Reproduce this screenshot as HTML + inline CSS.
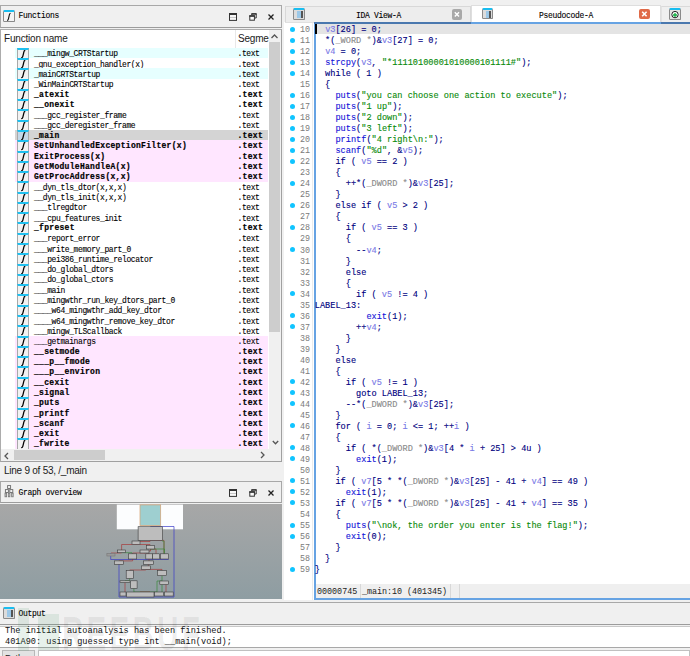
<!DOCTYPE html>
<html><head><meta charset="utf-8">
<style>
*{margin:0;padding:0;box-sizing:border-box}
html,body{width:690px;height:656px;overflow:hidden;background:#f0f0f0;font-family:"Liberation Sans",sans-serif}
.a{position:absolute}
.mono{font-family:"Liberation Mono",monospace;white-space:pre}
.tt{position:absolute;font-family:"Liberation Mono",monospace;font-size:8px;letter-spacing:-0.3px;color:#000;white-space:pre;-webkit-text-stroke:0.1px #000;transform:scaleY(1.15);transform-origin:0 0}
/* generic window-icon */
.wi{position:absolute;width:12px;height:12px;border:1px solid #8a8a8a;border-top:2px solid #18bdf0;background:#e8e8e8;border-radius:1.5px}
/* list rows */
.r{position:absolute;left:14px;width:253px;height:10.28px;font-family:"Liberation Mono",monospace;font-size:8px;letter-spacing:-0.4px;line-height:10.28px;color:#000;white-space:pre;-webkit-text-stroke:0.1px #000}
.r.b{font-weight:bold;letter-spacing:0.3px;-webkit-text-stroke:0.2px #000}
.r .fi{position:absolute;z-index:1;left:2px;top:-0.2px;width:12px;height:10.5px;border-left:1.3px solid #a8a8a8;border-right:1.3px solid #a8a8a8;border-top:2px solid #1ec0f0;background:#f2f2f2}
.r .fi svg{position:absolute;left:0;top:0}
.r .fn{position:absolute;left:19px;top:0.4px;transform:scaleY(1.2);transform-origin:0 0}
.r .sg{position:absolute;left:222.5px;top:0.4px;transform:scaleY(1.2);transform-origin:0 0}
.r.b .fn,.r.b .sg{top:-0.2px;transform:scaleY(1.1)}
.ln{position:absolute;left:0;width:29px;height:11px}
.ln b{position:absolute;left:4.5px;top:1.5px;width:5px;height:5px;border-radius:50%;background:#10c4ff}
.ln span{position:absolute;right:4px;top:0px;font-family:"Liberation Mono",monospace;font-size:8.4px;line-height:11px;color:#7a7a7a}
.cl{position:absolute;left:0.8px;width:373px;height:11px;font-family:"Liberation Mono",monospace;font-size:8.6px;line-height:11px;color:#000080;white-space:pre;-webkit-text-stroke:0.12px}
.cl span.t{position:relative;top:0.5px}
.st{color:#0a8a0a}
.ty{color:#8a8a8a}
.lv{color:#7a7ae6}
.fu{color:#1414d8}
</style></head><body>

<!-- ============ FUNCTIONS PANEL ============ -->
<div class="a" style="left:0;top:5px;width:282px;height:23px;background:#f0f0f0;border:1px solid #a8a8a8;border-bottom:1.5px solid #9c9c9c"></div>
<div class="wi" style="left:3px;top:10px;width:11.5px;height:11.5px;background:#f4f4f4"><svg class="a" style="left:0;top:0" width="10" height="10" viewBox="0 0 10 10"><path d="M6.6 1.2 C5.9 1.2 5.6 1.8 5.4 2.6 L4.4 7.2 C4.2 8 3.8 8.4 3.1 8.4" stroke="#111" stroke-width="1.1" fill="none"/></svg></div>
<span class="tt" style="left:18.5px;top:10px">Functions</span>
<!-- title buttons -->
<svg class="a" style="left:228px;top:12px" width="50" height="10" viewBox="0 0 50 10">
  <rect x="1.5" y="1.8" width="7" height="6.6" fill="#f8f8f8" stroke="#333" stroke-width="1"/>
  <rect x="1" y="1" width="8" height="2" fill="#333"/>
  <line x1="2" y1="5.5" x2="8" y2="5.5" stroke="#bbb" stroke-width="0.8"/>
  <path d="M23.8 3 V1.8 H28.2 V6 H26.8" fill="none" stroke="#333" stroke-width="1"/>
  <rect x="21.8" y="3.8" width="4.6" height="4.4" fill="#fafafa" stroke="#333" stroke-width="1"/>
  <rect x="21.3" y="3.3" width="5.6" height="1.5" fill="#333"/>
  <rect x="23.3" y="1.3" width="5.4" height="1.3" fill="#333"/>
  <path d="M40.5 2.5 L45.5 7.5 M45.5 2.5 L40.5 7.5" stroke="#222" stroke-width="1.3"/>
</svg>

<div class="a" style="left:0;top:29px;width:282px;height:433px;background:#fff;border:1px solid #acacac;border-right:1.5px solid #a0a0a0;border-bottom:1.5px solid #a0a0a0;overflow:hidden">
  <div class="a" style="left:3px;top:3px;font-size:10px;letter-spacing:-0.2px;color:#1a1a1a">Function name</div>
  <div class="a" style="left:233.5px;top:0;width:1px;height:18px;background:#e8e8e8"></div>
  <div class="a" style="left:237px;top:3px;font-size:10px;letter-spacing:-0.2px;color:#1a1a1a">Segme</div>
<div class="r" style="top:17.90px;background:#e6ffff"><i class="fi"><svg width="10" height="9" viewBox="0 0 10 9"><path d="M7.3 0.6 C6.5 0.4 6.1 1 5.9 1.8 L4.8 6.4 C4.6 7.2 4.2 7.7 3.2 7.5" stroke="#000" stroke-width="1.25" fill="none"/></svg></i><span class="fn">___mingw_CRTStartup</span><span class="sg">.text</span></div>
<div class="r" style="top:28.18px;background:transparent"><i class="fi"><svg width="10" height="9" viewBox="0 0 10 9"><path d="M7.3 0.6 C6.5 0.4 6.1 1 5.9 1.8 L4.8 6.4 C4.6 7.2 4.2 7.7 3.2 7.5" stroke="#000" stroke-width="1.25" fill="none"/></svg></i><span class="fn">_gnu_exception_handler(x)</span><span class="sg">.text</span></div>
<div class="r" style="top:38.46px;background:#e6ffff"><i class="fi"><svg width="10" height="9" viewBox="0 0 10 9"><path d="M7.3 0.6 C6.5 0.4 6.1 1 5.9 1.8 L4.8 6.4 C4.6 7.2 4.2 7.7 3.2 7.5" stroke="#000" stroke-width="1.25" fill="none"/></svg></i><span class="fn">_mainCRTStartup</span><span class="sg">.text</span></div>
<div class="r" style="top:48.74px;background:transparent"><i class="fi"><svg width="10" height="9" viewBox="0 0 10 9"><path d="M7.3 0.6 C6.5 0.4 6.1 1 5.9 1.8 L4.8 6.4 C4.6 7.2 4.2 7.7 3.2 7.5" stroke="#000" stroke-width="1.25" fill="none"/></svg></i><span class="fn">_WinMainCRTStartup</span><span class="sg">.text</span></div>
<div class="r b" style="top:59.02px;background:transparent"><i class="fi"><svg width="10" height="9" viewBox="0 0 10 9"><path d="M7.3 0.6 C6.5 0.4 6.1 1 5.9 1.8 L4.8 6.4 C4.6 7.2 4.2 7.7 3.2 7.5" stroke="#000" stroke-width="1.25" fill="none"/></svg></i><span class="fn">_atexit</span><span class="sg">.text</span></div>
<div class="r b" style="top:69.30px;background:transparent"><i class="fi"><svg width="10" height="9" viewBox="0 0 10 9"><path d="M7.3 0.6 C6.5 0.4 6.1 1 5.9 1.8 L4.8 6.4 C4.6 7.2 4.2 7.7 3.2 7.5" stroke="#000" stroke-width="1.25" fill="none"/></svg></i><span class="fn">__onexit</span><span class="sg">.text</span></div>
<div class="r" style="top:79.58px;background:transparent"><i class="fi"><svg width="10" height="9" viewBox="0 0 10 9"><path d="M7.3 0.6 C6.5 0.4 6.1 1 5.9 1.8 L4.8 6.4 C4.6 7.2 4.2 7.7 3.2 7.5" stroke="#000" stroke-width="1.25" fill="none"/></svg></i><span class="fn">___gcc_register_frame</span><span class="sg">.text</span></div>
<div class="r" style="top:89.86px;background:transparent"><i class="fi"><svg width="10" height="9" viewBox="0 0 10 9"><path d="M7.3 0.6 C6.5 0.4 6.1 1 5.9 1.8 L4.8 6.4 C4.6 7.2 4.2 7.7 3.2 7.5" stroke="#000" stroke-width="1.25" fill="none"/></svg></i><span class="fn">___gcc_deregister_frame</span><span class="sg">.text</span></div>
<div class="r b" style="top:100.14px;background:#d4d4d4"><i class="fi" style="background:#c4d8e8"><svg width="10" height="9" viewBox="0 0 10 9"><path d="M7.3 0.6 C6.5 0.4 6.1 1 5.9 1.8 L4.8 6.4 C4.6 7.2 4.2 7.7 3.2 7.5" stroke="#000" stroke-width="1.25" fill="none"/></svg></i><span class="fn">_main</span><span class="sg">.text</span></div>
<div class="r b" style="top:110.42px;background:#ffe6ff"><i class="fi"><svg width="10" height="9" viewBox="0 0 10 9"><path d="M7.3 0.6 C6.5 0.4 6.1 1 5.9 1.8 L4.8 6.4 C4.6 7.2 4.2 7.7 3.2 7.5" stroke="#000" stroke-width="1.25" fill="none"/></svg></i><span class="fn">SetUnhandledExceptionFilter(x)</span><span class="sg">.text</span></div>
<div class="r b" style="top:120.70px;background:#ffe6ff"><i class="fi"><svg width="10" height="9" viewBox="0 0 10 9"><path d="M7.3 0.6 C6.5 0.4 6.1 1 5.9 1.8 L4.8 6.4 C4.6 7.2 4.2 7.7 3.2 7.5" stroke="#000" stroke-width="1.25" fill="none"/></svg></i><span class="fn">ExitProcess(x)</span><span class="sg">.text</span></div>
<div class="r b" style="top:130.98px;background:#ffe6ff"><i class="fi"><svg width="10" height="9" viewBox="0 0 10 9"><path d="M7.3 0.6 C6.5 0.4 6.1 1 5.9 1.8 L4.8 6.4 C4.6 7.2 4.2 7.7 3.2 7.5" stroke="#000" stroke-width="1.25" fill="none"/></svg></i><span class="fn">GetModuleHandleA(x)</span><span class="sg">.text</span></div>
<div class="r b" style="top:141.26px;background:#ffe6ff"><i class="fi"><svg width="10" height="9" viewBox="0 0 10 9"><path d="M7.3 0.6 C6.5 0.4 6.1 1 5.9 1.8 L4.8 6.4 C4.6 7.2 4.2 7.7 3.2 7.5" stroke="#000" stroke-width="1.25" fill="none"/></svg></i><span class="fn">GetProcAddress(x,x)</span><span class="sg">.text</span></div>
<div class="r" style="top:151.54px;background:transparent"><i class="fi"><svg width="10" height="9" viewBox="0 0 10 9"><path d="M7.3 0.6 C6.5 0.4 6.1 1 5.9 1.8 L4.8 6.4 C4.6 7.2 4.2 7.7 3.2 7.5" stroke="#000" stroke-width="1.25" fill="none"/></svg></i><span class="fn">__dyn_tls_dtor(x,x,x)</span><span class="sg">.text</span></div>
<div class="r" style="top:161.82px;background:transparent"><i class="fi"><svg width="10" height="9" viewBox="0 0 10 9"><path d="M7.3 0.6 C6.5 0.4 6.1 1 5.9 1.8 L4.8 6.4 C4.6 7.2 4.2 7.7 3.2 7.5" stroke="#000" stroke-width="1.25" fill="none"/></svg></i><span class="fn">__dyn_tls_init(x,x,x)</span><span class="sg">.text</span></div>
<div class="r" style="top:172.10px;background:transparent"><i class="fi"><svg width="10" height="9" viewBox="0 0 10 9"><path d="M7.3 0.6 C6.5 0.4 6.1 1 5.9 1.8 L4.8 6.4 C4.6 7.2 4.2 7.7 3.2 7.5" stroke="#000" stroke-width="1.25" fill="none"/></svg></i><span class="fn">___tlregdtor</span><span class="sg">.text</span></div>
<div class="r" style="top:182.38px;background:transparent"><i class="fi"><svg width="10" height="9" viewBox="0 0 10 9"><path d="M7.3 0.6 C6.5 0.4 6.1 1 5.9 1.8 L4.8 6.4 C4.6 7.2 4.2 7.7 3.2 7.5" stroke="#000" stroke-width="1.25" fill="none"/></svg></i><span class="fn">___cpu_features_init</span><span class="sg">.text</span></div>
<div class="r b" style="top:192.66px;background:transparent"><i class="fi"><svg width="10" height="9" viewBox="0 0 10 9"><path d="M7.3 0.6 C6.5 0.4 6.1 1 5.9 1.8 L4.8 6.4 C4.6 7.2 4.2 7.7 3.2 7.5" stroke="#000" stroke-width="1.25" fill="none"/></svg></i><span class="fn">_fpreset</span><span class="sg">.text</span></div>
<div class="r" style="top:202.94px;background:transparent"><i class="fi"><svg width="10" height="9" viewBox="0 0 10 9"><path d="M7.3 0.6 C6.5 0.4 6.1 1 5.9 1.8 L4.8 6.4 C4.6 7.2 4.2 7.7 3.2 7.5" stroke="#000" stroke-width="1.25" fill="none"/></svg></i><span class="fn">___report_error</span><span class="sg">.text</span></div>
<div class="r" style="top:213.22px;background:transparent"><i class="fi"><svg width="10" height="9" viewBox="0 0 10 9"><path d="M7.3 0.6 C6.5 0.4 6.1 1 5.9 1.8 L4.8 6.4 C4.6 7.2 4.2 7.7 3.2 7.5" stroke="#000" stroke-width="1.25" fill="none"/></svg></i><span class="fn">___write_memory_part_0</span><span class="sg">.text</span></div>
<div class="r" style="top:223.50px;background:transparent"><i class="fi"><svg width="10" height="9" viewBox="0 0 10 9"><path d="M7.3 0.6 C6.5 0.4 6.1 1 5.9 1.8 L4.8 6.4 C4.6 7.2 4.2 7.7 3.2 7.5" stroke="#000" stroke-width="1.25" fill="none"/></svg></i><span class="fn">___pei386_runtime_relocator</span><span class="sg">.text</span></div>
<div class="r" style="top:233.78px;background:transparent"><i class="fi"><svg width="10" height="9" viewBox="0 0 10 9"><path d="M7.3 0.6 C6.5 0.4 6.1 1 5.9 1.8 L4.8 6.4 C4.6 7.2 4.2 7.7 3.2 7.5" stroke="#000" stroke-width="1.25" fill="none"/></svg></i><span class="fn">___do_global_dtors</span><span class="sg">.text</span></div>
<div class="r" style="top:244.06px;background:transparent"><i class="fi"><svg width="10" height="9" viewBox="0 0 10 9"><path d="M7.3 0.6 C6.5 0.4 6.1 1 5.9 1.8 L4.8 6.4 C4.6 7.2 4.2 7.7 3.2 7.5" stroke="#000" stroke-width="1.25" fill="none"/></svg></i><span class="fn">___do_global_ctors</span><span class="sg">.text</span></div>
<div class="r" style="top:254.34px;background:transparent"><i class="fi"><svg width="10" height="9" viewBox="0 0 10 9"><path d="M7.3 0.6 C6.5 0.4 6.1 1 5.9 1.8 L4.8 6.4 C4.6 7.2 4.2 7.7 3.2 7.5" stroke="#000" stroke-width="1.25" fill="none"/></svg></i><span class="fn">___main</span><span class="sg">.text</span></div>
<div class="r" style="top:264.62px;background:transparent"><i class="fi"><svg width="10" height="9" viewBox="0 0 10 9"><path d="M7.3 0.6 C6.5 0.4 6.1 1 5.9 1.8 L4.8 6.4 C4.6 7.2 4.2 7.7 3.2 7.5" stroke="#000" stroke-width="1.25" fill="none"/></svg></i><span class="fn">___mingwthr_run_key_dtors_part_0</span><span class="sg">.text</span></div>
<div class="r" style="top:274.90px;background:transparent"><i class="fi"><svg width="10" height="9" viewBox="0 0 10 9"><path d="M7.3 0.6 C6.5 0.4 6.1 1 5.9 1.8 L4.8 6.4 C4.6 7.2 4.2 7.7 3.2 7.5" stroke="#000" stroke-width="1.25" fill="none"/></svg></i><span class="fn">____w64_mingwthr_add_key_dtor</span><span class="sg">.text</span></div>
<div class="r" style="top:285.18px;background:transparent"><i class="fi"><svg width="10" height="9" viewBox="0 0 10 9"><path d="M7.3 0.6 C6.5 0.4 6.1 1 5.9 1.8 L4.8 6.4 C4.6 7.2 4.2 7.7 3.2 7.5" stroke="#000" stroke-width="1.25" fill="none"/></svg></i><span class="fn">____w64_mingwthr_remove_key_dtor</span><span class="sg">.text</span></div>
<div class="r" style="top:295.46px;background:transparent"><i class="fi"><svg width="10" height="9" viewBox="0 0 10 9"><path d="M7.3 0.6 C6.5 0.4 6.1 1 5.9 1.8 L4.8 6.4 C4.6 7.2 4.2 7.7 3.2 7.5" stroke="#000" stroke-width="1.25" fill="none"/></svg></i><span class="fn">___mingw_TLScallback</span><span class="sg">.text</span></div>
<div class="r" style="top:305.74px;background:#ffe6ff"><i class="fi"><svg width="10" height="9" viewBox="0 0 10 9"><path d="M7.3 0.6 C6.5 0.4 6.1 1 5.9 1.8 L4.8 6.4 C4.6 7.2 4.2 7.7 3.2 7.5" stroke="#000" stroke-width="1.25" fill="none"/></svg></i><span class="fn">___getmainargs</span><span class="sg">.text</span></div>
<div class="r b" style="top:316.02px;background:#ffe6ff"><i class="fi"><svg width="10" height="9" viewBox="0 0 10 9"><path d="M7.3 0.6 C6.5 0.4 6.1 1 5.9 1.8 L4.8 6.4 C4.6 7.2 4.2 7.7 3.2 7.5" stroke="#000" stroke-width="1.25" fill="none"/></svg></i><span class="fn">__setmode</span><span class="sg">.text</span></div>
<div class="r b" style="top:326.30px;background:#ffe6ff"><i class="fi"><svg width="10" height="9" viewBox="0 0 10 9"><path d="M7.3 0.6 C6.5 0.4 6.1 1 5.9 1.8 L4.8 6.4 C4.6 7.2 4.2 7.7 3.2 7.5" stroke="#000" stroke-width="1.25" fill="none"/></svg></i><span class="fn">___p__fmode</span><span class="sg">.text</span></div>
<div class="r b" style="top:336.58px;background:#ffe6ff"><i class="fi"><svg width="10" height="9" viewBox="0 0 10 9"><path d="M7.3 0.6 C6.5 0.4 6.1 1 5.9 1.8 L4.8 6.4 C4.6 7.2 4.2 7.7 3.2 7.5" stroke="#000" stroke-width="1.25" fill="none"/></svg></i><span class="fn">___p__environ</span><span class="sg">.text</span></div>
<div class="r b" style="top:346.86px;background:#ffe6ff"><i class="fi"><svg width="10" height="9" viewBox="0 0 10 9"><path d="M7.3 0.6 C6.5 0.4 6.1 1 5.9 1.8 L4.8 6.4 C4.6 7.2 4.2 7.7 3.2 7.5" stroke="#000" stroke-width="1.25" fill="none"/></svg></i><span class="fn">__cexit</span><span class="sg">.text</span></div>
<div class="r b" style="top:357.14px;background:#ffe6ff"><i class="fi"><svg width="10" height="9" viewBox="0 0 10 9"><path d="M7.3 0.6 C6.5 0.4 6.1 1 5.9 1.8 L4.8 6.4 C4.6 7.2 4.2 7.7 3.2 7.5" stroke="#000" stroke-width="1.25" fill="none"/></svg></i><span class="fn">_signal</span><span class="sg">.text</span></div>
<div class="r b" style="top:367.42px;background:#ffe6ff"><i class="fi"><svg width="10" height="9" viewBox="0 0 10 9"><path d="M7.3 0.6 C6.5 0.4 6.1 1 5.9 1.8 L4.8 6.4 C4.6 7.2 4.2 7.7 3.2 7.5" stroke="#000" stroke-width="1.25" fill="none"/></svg></i><span class="fn">_puts</span><span class="sg">.text</span></div>
<div class="r b" style="top:377.70px;background:#ffe6ff"><i class="fi"><svg width="10" height="9" viewBox="0 0 10 9"><path d="M7.3 0.6 C6.5 0.4 6.1 1 5.9 1.8 L4.8 6.4 C4.6 7.2 4.2 7.7 3.2 7.5" stroke="#000" stroke-width="1.25" fill="none"/></svg></i><span class="fn">_printf</span><span class="sg">.text</span></div>
<div class="r b" style="top:387.98px;background:#ffe6ff"><i class="fi"><svg width="10" height="9" viewBox="0 0 10 9"><path d="M7.3 0.6 C6.5 0.4 6.1 1 5.9 1.8 L4.8 6.4 C4.6 7.2 4.2 7.7 3.2 7.5" stroke="#000" stroke-width="1.25" fill="none"/></svg></i><span class="fn">_scanf</span><span class="sg">.text</span></div>
<div class="r b" style="top:398.26px;background:#ffe6ff"><i class="fi"><svg width="10" height="9" viewBox="0 0 10 9"><path d="M7.3 0.6 C6.5 0.4 6.1 1 5.9 1.8 L4.8 6.4 C4.6 7.2 4.2 7.7 3.2 7.5" stroke="#000" stroke-width="1.25" fill="none"/></svg></i><span class="fn">_exit</span><span class="sg">.text</span></div>
<div class="r b" style="top:408.54px;background:#ffe6ff"><i class="fi"><svg width="10" height="9" viewBox="0 0 10 9"><path d="M7.3 0.6 C6.5 0.4 6.1 1 5.9 1.8 L4.8 6.4 C4.6 7.2 4.2 7.7 3.2 7.5" stroke="#000" stroke-width="1.25" fill="none"/></svg></i><span class="fn">_fwrite</span><span class="sg">.text</span></div>
  <!-- v scrollbar -->
  <div class="a" style="left:267.5px;top:0;width:12px;height:432px;background:#f0f0f0"></div>
  <div class="a" style="left:267.5px;top:11.8px;width:11px;height:290.5px;background:#cdcdcd"></div>
  <svg class="a" style="left:269px;top:3px" width="9" height="7" viewBox="0 0 9 7"><path d="M1.5 5 L4.5 2 L7.5 5" stroke="#555" stroke-width="1.3" fill="none"/></svg>
  <svg class="a" style="left:269.8px;top:409px" width="9" height="7" viewBox="0 0 9 7"><path d="M1.8 2 L4.5 4.8 L7.2 2" stroke="#555" stroke-width="1.3" fill="none"/></svg>
  <!-- h scrollbar -->
  <div class="a" style="left:0;top:419px;width:268px;height:12px;background:#f0f0f0"></div>
  <div class="a" style="left:12.5px;top:419.5px;width:91px;height:10.5px;background:#cdcdcd"></div>
  <svg class="a" style="left:2px;top:422px" width="7" height="8" viewBox="0 0 7 8"><path d="M5 1 L2 4 L5 7" stroke="#555" stroke-width="1.3" fill="none"/></svg>
  <svg class="a" style="left:257.8px;top:421px" width="7" height="8" viewBox="0 0 7 8"><path d="M2 1 L5 4 L2 7" stroke="#555" stroke-width="1.3" fill="none"/></svg>
</div>
<div class="a" style="left:4px;top:464.5px;font-size:10px;letter-spacing:-0.25px;color:#1a1a1a">Line 9 of 53, /_main</div>

<!-- ============ GRAPH OVERVIEW ============ -->
<div class="a" style="left:0;top:481px;width:282px;height:22px;background:#f0f0f0;border:1px solid #a8a8a8;border-bottom:1.5px solid #9c9c9c"></div>
<svg class="a" style="left:3.8px;top:485px" width="11" height="13" viewBox="0 0 11 13">
  <rect x="3.6" y="0.6" width="3" height="2.8" fill="#f4f4f4" stroke="#6a6a6a" stroke-width="0.9"/>
  <path d="M5.1 3.4 V4.6" stroke="#6a6a6a" stroke-width="0.9"/>
  <rect x="1.4" y="4.6" width="3" height="2.9" fill="#f4f4f4" stroke="#6a6a6a" stroke-width="0.9"/>
  <rect x="5.8" y="4.6" width="3" height="2.9" fill="#f4f4f4" stroke="#6a6a6a" stroke-width="0.9"/>
  <rect x="0.6" y="7.8" width="2.4" height="4.4" fill="#777"/>
  <rect x="3.9" y="7.8" width="2.4" height="4.4" fill="#777"/>
  <rect x="7.2" y="7.8" width="2.4" height="4.4" fill="#777"/>
  <rect x="1.3" y="8.6" width="1" height="2.8" fill="#bbb"/>
  <rect x="4.6" y="8.6" width="1" height="2.8" fill="#bbb"/>
  <rect x="7.9" y="8.6" width="1" height="2.8" fill="#bbb"/>
</svg>
<span class="tt" style="left:18.5px;top:487px">Graph overview</span>
<svg class="a" style="left:228px;top:488px" width="50" height="10" viewBox="0 0 50 10">
  <rect x="1.5" y="1.8" width="7" height="6.6" fill="#f8f8f8" stroke="#333" stroke-width="1"/>
  <rect x="1" y="1" width="8" height="2" fill="#333"/>
  <line x1="2" y1="5.5" x2="8" y2="5.5" stroke="#bbb" stroke-width="0.8"/>
  <path d="M23.8 3 V1.8 H28.2 V6 H26.8" fill="none" stroke="#333" stroke-width="1"/>
  <rect x="21.8" y="3.8" width="4.6" height="4.4" fill="#fafafa" stroke="#333" stroke-width="1"/>
  <rect x="21.3" y="3.3" width="5.6" height="1.5" fill="#333"/>
  <rect x="23.3" y="1.3" width="5.4" height="1.3" fill="#333"/>
  <path d="M40.5 2.5 L45.5 7.5 M45.5 2.5 L40.5 7.5" stroke="#222" stroke-width="1.3"/>
</svg>
<div class="a" style="left:0;top:504px;width:282px;height:95px;background:linear-gradient(#a7a7a7,#8e9da2)"></div>
<svg class="a" style="left:0;top:504px" width="282" height="95" viewBox="0 504 282 95">
  <rect x="116.8" y="504.6" width="66.2" height="24.7" fill="#fcfdfe"/>
  <rect x="140" y="504.9" width="20.7" height="20.7" fill="#9ecfd0" stroke="#d8a070" stroke-width="0.7"/>
  <g fill="none" stroke-width="0.7">
    <path d="M150.3 526.5 H174 V597 H119 V563" stroke="#3a3ac8"/>
    <path d="M110.7 553 V559.5 H168.6" stroke="#3a3ac8"/>
    <path d="M150 540.4 V541.5 H136 V545 M150 540.4 H164 V553.8 M136 544.5 H150 V545.5" stroke="#a83a3a"/>
    <path d="M162 540.4 V541 H164 V553.8" stroke="#3a8a3a"/>
    <path d="M136 544.5 H121.6 V550 M150.5 549 V551 H144.5 V550 M150.5 549 H156 V553.8 M121.6 552.7 V553 H111 M144.5 553 H132.6 V553.8 M144 553 H149 V553.8" stroke="#a83a3a"/>
    <path d="M150 549 H164.5 V553.8 M121.6 552.7 H132 V553.8" stroke="#3a8a3a"/>
    <path d="M132.6 559 V560.9 H118.8 M149 559 V560.9 M148.4 564.3 V565.9 M145.8 569.4 V570 H129.7 V570.5 M145.8 569.4 H162 V570.6" stroke="#a83a3a"/>
    <path d="M162 575.7 V581 M129.7 578.4 V580.8 H125 M162 584.5 V592 M133.9 588.4 V592 H157 V581 H162" stroke="#3a8a3a"/>
    <path d="M125 582.5 V592 M140 592 H150 M166 584.5 V592" stroke="#a83a3a"/>
  </g>
  <g fill="#bdbdbd" stroke="#3c3c3c" stroke-width="0.6">
    <rect x="138.1" y="526.7" width="24.4" height="13.7"/>
    <rect x="132" y="541" width="8" height="3.5"/>
    <rect x="146.5" y="545.5" width="8" height="3.5"/>
    <rect x="117.6" y="550" width="8" height="2.7"/>
    <rect x="140" y="550" width="9" height="3"/>
    <rect x="106.9" y="553.6" width="8.1" height="2.4" fill="#9a9a9a" stroke="#777"/>
    <rect x="128.6" y="553.8" width="8.1" height="5.2"/>
    <rect x="145.8" y="553.8" width="6.9" height="5.2"/>
    <rect x="152.7" y="553.8" width="6.8" height="5.2"/>
    <rect x="160.5" y="553.8" width="8.1" height="5.2"/>
    <rect x="114.3" y="560.9" width="9.1" height="3.4"/>
    <rect x="143.5" y="560.9" width="9.9" height="3.4"/>
    <rect x="141.3" y="565.9" width="9" height="3.5"/>
    <rect x="126.2" y="570.5" width="7.1" height="7.9"/>
    <rect x="157.5" y="570.6" width="9.1" height="5.1"/>
    <rect x="120" y="580.8" width="10" height="1.7"/>
    <rect x="130.7" y="580.8" width="6.4" height="7.6"/>
    <rect x="159.8" y="581" width="8.7" height="3.5"/>
    <rect x="120" y="592" width="6" height="4"/>
    <rect x="126.7" y="592" width="27.3" height="5"/>
    <rect x="154.6" y="592" width="8.9" height="4"/>
    <rect x="164.3" y="592" width="8.9" height="4"/>
  </g>
</svg>


<!-- ============ PSEUDOCODE PANEL ============ -->
<div class="a" style="left:285px;top:6px;width:186px;height:16.5px;background:#ededed;border:1px solid #d8d8d8;border-bottom:none"></div>
<div class="wi" style="left:293px;top:8px;width:11.5px;height:11.5px;background:#dcdcdc"><div class="a" style="left:3px;top:1px;width:3.5px;height:7px;background:#9cc8e8"></div><div class="a" style="left:6.5px;top:1px;width:2px;height:7px;background:#555"></div></div>
<span class="tt" style="left:356px;top:10px">IDA View-A</span>
<div class="a" style="left:452px;top:9px;width:9.5px;height:10.5px;background:#a9a9a9;border-radius:2px"></div>
<svg class="a" style="left:452px;top:9px" width="10" height="11" viewBox="0 0 10 11"><path d="M2.8 3.3 L7 7.5 M7 3.3 L2.8 7.5" stroke="#fff" stroke-width="1.4"/></svg>

<div class="a" style="left:471px;top:5px;width:190px;height:17.5px;background:#fff;border:1px solid #dedede;border-bottom:none"></div>
<div class="wi" style="left:481.5px;top:7.5px;width:11.5px;height:11.5px;background:#dcdcdc"><div class="a" style="left:3px;top:1px;width:3.5px;height:7px;background:#9cc8e8"></div><div class="a" style="left:6.5px;top:1px;width:2px;height:7px;background:#555"></div></div>
<span class="tt" style="left:539px;top:9.5px">Pseudocode-A</span>
<div class="a" style="left:639px;top:8.7px;width:10.8px;height:10px;background:#e06a48;border-radius:2px"></div>
<svg class="a" style="left:639px;top:8.7px" width="11" height="10" viewBox="0 0 11 10"><path d="M3.2 2.8 L7.6 7.2 M7.6 2.8 L3.2 7.2" stroke="#fff" stroke-width="1.6"/></svg>

<div class="a" style="left:661px;top:6.3px;width:29px;height:16px;background:#efefef;border-top:1px solid #dadada;border-left:1px solid #e2e2e2"></div>
<div class="wi" style="left:668.5px;top:7.8px;width:12px;height:11.8px;background:#e4e4e4"></div>
<svg class="a" style="left:668.5px;top:7.8px" width="12" height="12" viewBox="0 0 12 12"><circle cx="6" cy="6.6" r="3.2" fill="#fff" stroke="#222" stroke-width="1"/><path d="M6 5 V9 M4 7 H8" stroke="#10b040" stroke-width="1.3"/></svg>

<div class="a" style="left:284px;top:22px;width:30px;height:578px;background:#fff"></div>
<div class="a" style="left:312px;top:22px;width:1px;height:578px;background:#ececec"></div>
<div class="a" style="left:285px;top:22px;width:29px;height:1px;background:#e0e0e0"></div>
<div class="a" style="left:285px;top:22px;width:29px;height:578px">
<div class="ln" style="top:3.10px"><b></b><span>10</span></div>
<div class="ln" style="top:14.12px"><b></b><span>11</span></div>
<div class="ln" style="top:25.14px"><b></b><span>12</span></div>
<div class="ln" style="top:36.16px"><b></b><span>13</span></div>
<div class="ln" style="top:47.18px"><b></b><span>14</span></div>
<div class="ln" style="top:58.20px"><span>15</span></div>
<div class="ln" style="top:69.22px"><b></b><span>16</span></div>
<div class="ln" style="top:80.24px"><b></b><span>17</span></div>
<div class="ln" style="top:91.26px"><b></b><span>18</span></div>
<div class="ln" style="top:102.28px"><b></b><span>19</span></div>
<div class="ln" style="top:113.30px"><b></b><span>20</span></div>
<div class="ln" style="top:124.32px"><b></b><span>21</span></div>
<div class="ln" style="top:135.34px"><b></b><span>22</span></div>
<div class="ln" style="top:146.36px"><span>23</span></div>
<div class="ln" style="top:157.38px"><b></b><span>24</span></div>
<div class="ln" style="top:168.40px"><span>25</span></div>
<div class="ln" style="top:179.42px"><b></b><span>26</span></div>
<div class="ln" style="top:190.44px"><span>27</span></div>
<div class="ln" style="top:201.46px"><b></b><span>28</span></div>
<div class="ln" style="top:212.48px"><span>29</span></div>
<div class="ln" style="top:223.50px"><b></b><span>30</span></div>
<div class="ln" style="top:234.52px"><span>31</span></div>
<div class="ln" style="top:245.54px"><span>32</span></div>
<div class="ln" style="top:256.56px"><span>33</span></div>
<div class="ln" style="top:267.58px"><b></b><span>34</span></div>
<div class="ln" style="top:278.60px"><span>35</span></div>
<div class="ln" style="top:289.62px"><b></b><span>36</span></div>
<div class="ln" style="top:300.64px"><b></b><span>37</span></div>
<div class="ln" style="top:311.66px"><span>38</span></div>
<div class="ln" style="top:322.68px"><span>39</span></div>
<div class="ln" style="top:333.70px"><span>40</span></div>
<div class="ln" style="top:344.72px"><span>41</span></div>
<div class="ln" style="top:355.74px"><b></b><span>42</span></div>
<div class="ln" style="top:366.76px"><b></b><span>43</span></div>
<div class="ln" style="top:377.78px"><b></b><span>44</span></div>
<div class="ln" style="top:388.80px"><span>45</span></div>
<div class="ln" style="top:399.82px"><b></b><span>46</span></div>
<div class="ln" style="top:410.84px"><span>47</span></div>
<div class="ln" style="top:421.86px"><b></b><span>48</span></div>
<div class="ln" style="top:432.88px"><b></b><span>49</span></div>
<div class="ln" style="top:443.90px"><span>50</span></div>
<div class="ln" style="top:454.92px"><b></b><span>51</span></div>
<div class="ln" style="top:465.94px"><b></b><span>52</span></div>
<div class="ln" style="top:476.96px"><b></b><span>53</span></div>
<div class="ln" style="top:487.98px"><span>54</span></div>
<div class="ln" style="top:499.00px"><b></b><span>55</span></div>
<div class="ln" style="top:510.02px"><b></b><span>56</span></div>
<div class="ln" style="top:521.04px"><span>57</span></div>
<div class="ln" style="top:532.06px"><span>58</span></div>
<div class="ln" style="top:543.08px"><b></b><span>59</span></div>
</div>
<div class="a" style="left:314px;top:22px;width:376px;height:578px;background:#fff;border:2px solid #66a3e3;border-right:none"></div>
<div class="a" style="left:314px;top:22px;width:157px;height:1.7px;background:#4a78ae"></div>
<div class="a" style="left:661px;top:22px;width:29px;height:1.7px;background:#4a78ae"></div>
<div class="a" style="left:316px;top:23.7px;width:374px;height:0.8px;background:#fff3e6"></div>
<div class="a" style="left:317px;top:24.3px;width:373px;height:9.7px;background:#e4e4e4"></div>
<div class="a" style="left:314px;top:22px;width:376px;height:560px">
<div class="cl hl" style="top:3.10px">  <span class="lv">v3</span>[26] = 0;</div>
<div class="cl" style="top:14.12px">  *(<span class="ty">_WORD *</span>)&amp;<span class="lv">v3</span>[27] = 0;</div>
<div class="cl" style="top:25.14px">  <span class="lv">v4</span> = 0;</div>
<div class="cl" style="top:36.16px">  <span class="fu">strcpy</span>(<span class="lv">v3</span>, <span class="st">&quot;*11110100001010000101111#&quot;</span>);</div>
<div class="cl" style="top:47.18px">  while ( 1 )</div>
<div class="cl" style="top:58.20px">  {</div>
<div class="cl" style="top:69.22px">    <span class="fu">puts</span>(<span class="st">&quot;you can choose one action to execute&quot;</span>);</div>
<div class="cl" style="top:80.24px">    <span class="fu">puts</span>(<span class="st">&quot;1 up&quot;</span>);</div>
<div class="cl" style="top:91.26px">    <span class="fu">puts</span>(<span class="st">&quot;2 down&quot;</span>);</div>
<div class="cl" style="top:102.28px">    <span class="fu">puts</span>(<span class="st">&quot;3 left&quot;</span>);</div>
<div class="cl" style="top:113.30px">    <span class="fu">printf</span>(<span class="st">&quot;4 right\n:&quot;</span>);</div>
<div class="cl" style="top:124.32px">    <span class="fu">scanf</span>(<span class="st">&quot;%d&quot;</span>, &amp;<span class="lv">v5</span>);</div>
<div class="cl" style="top:135.34px">    if ( <span class="lv">v5</span> == 2 )</div>
<div class="cl" style="top:146.36px">    {</div>
<div class="cl" style="top:157.38px">      ++*(<span class="ty">_DWORD *</span>)&amp;<span class="lv">v3</span>[25];</div>
<div class="cl" style="top:168.40px">    }</div>
<div class="cl" style="top:179.42px">    else if ( <span class="lv">v5</span> &gt; 2 )</div>
<div class="cl" style="top:190.44px">    {</div>
<div class="cl" style="top:201.46px">      if ( <span class="lv">v5</span> == 3 )</div>
<div class="cl" style="top:212.48px">      {</div>
<div class="cl" style="top:223.50px">        --<span class="lv">v4</span>;</div>
<div class="cl" style="top:234.52px">      }</div>
<div class="cl" style="top:245.54px">      else</div>
<div class="cl" style="top:256.56px">      {</div>
<div class="cl" style="top:267.58px">        if ( <span class="lv">v5</span> != 4 )</div>
<div class="cl" style="top:278.60px">LABEL_13:</div>
<div class="cl" style="top:289.62px">          <span class="fu">exit</span>(1);</div>
<div class="cl" style="top:300.64px">        ++<span class="lv">v4</span>;</div>
<div class="cl" style="top:311.66px">      }</div>
<div class="cl" style="top:322.68px">    }</div>
<div class="cl" style="top:333.70px">    else</div>
<div class="cl" style="top:344.72px">    {</div>
<div class="cl" style="top:355.74px">      if ( <span class="lv">v5</span> != 1 )</div>
<div class="cl" style="top:366.76px">        goto LABEL_13;</div>
<div class="cl" style="top:377.78px">      --*(<span class="ty">_DWORD *</span>)&amp;<span class="lv">v3</span>[25];</div>
<div class="cl" style="top:388.80px">    }</div>
<div class="cl" style="top:399.82px">    for ( <span class="lv">i</span> = 0; <span class="lv">i</span> &lt;= 1; ++<span class="lv">i</span> )</div>
<div class="cl" style="top:410.84px">    {</div>
<div class="cl" style="top:421.86px">      if ( *(<span class="ty">_DWORD *</span>)&amp;<span class="lv">v3</span>[4 * <span class="lv">i</span> + 25] &gt; 4u )</div>
<div class="cl" style="top:432.88px">        <span class="fu">exit</span>(1);</div>
<div class="cl" style="top:443.90px">    }</div>
<div class="cl" style="top:454.92px">    if ( <span class="lv">v7</span>[5 * *(<span class="ty">_DWORD *</span>)&amp;<span class="lv">v3</span>[25] - 41 + <span class="lv">v4</span>] == 49 )</div>
<div class="cl" style="top:465.94px">      <span class="fu">exit</span>(1);</div>
<div class="cl" style="top:476.96px">    if ( <span class="lv">v7</span>[5 * *(<span class="ty">_DWORD *</span>)&amp;<span class="lv">v3</span>[25] - 41 + <span class="lv">v4</span>] == 35 )</div>
<div class="cl" style="top:487.98px">    {</div>
<div class="cl" style="top:499.00px">      <span class="fu">puts</span>(<span class="st">&quot;\nok, the order you enter is the flag!&quot;</span>);</div>
<div class="cl" style="top:510.02px">      <span class="fu">exit</span>(0);</div>
<div class="cl" style="top:521.04px">    }</div>
<div class="cl" style="top:532.06px">  }</div>
<div class="cl" style="top:543.08px">}</div>
</div>
<div class="a" style="left:315.2px;top:23.5px;width:1.8px;height:10.5px;background:#000"></div>
<div class="a" style="left:316px;top:584px;width:374px;height:14px;background:#efefef"></div>
<div class="a" style="left:360px;top:584px;width:1px;height:14px;background:#d8d8d8"></div>
<div class="a" style="left:450px;top:584px;width:1px;height:14px;background:#d8d8d8"></div>
<div class="a" style="left:458.5px;top:584px;width:1px;height:14px;background:#d8d8d8"></div>
<span class="a mono" style="left:317px;top:587px;font-size:8.4px;color:#222">00000745</span>
<span class="a mono" style="left:362px;top:587px;font-size:8.4px;letter-spacing:-0.02px;color:#222">_main:10 (401345)</span>

<!-- ============ OUTPUT ============ -->
<div class="a" style="left:0;top:602px;width:690px;height:23px;background:#f0f0f0;border-top:1px solid #a8a8a8;border-bottom:1.5px solid #9c9c9c"></div>
<div class="wi" style="left:3px;top:607px;width:11.5px;height:11.5px;background:#dcdcdc"><div class="a" style="left:3px;top:1px;width:3.5px;height:7px;background:#9cc8e8"></div><div class="a" style="left:6.5px;top:1px;width:2px;height:7px;background:#555"></div></div>
<span class="tt" style="left:18.5px;top:608px">Output</span>
<div class="a" style="left:0;top:625.5px;width:690px;height:22.5px;background:#fff;border-top:1px solid #c8c8c8;border-bottom:1.5px solid #a8a8a8"></div>
<div class="a mono" style="left:5px;top:625.5px;font-size:8.6px;line-height:11px;color:#111">The initial autoanalysis has been finished.
401A90: using guessed type int __main(void);</div>
<div class="a" style="left:2px;top:650px;width:33px;height:8px;background:#e2e2e2;border:1px solid #b8b8b8;border-bottom:none"></div>
<div class="a" style="left:38px;top:650px;width:652px;height:8px;background:#fff;border:1px solid #c0c0c0;border-bottom:none"></div>
<span class="a" style="left:5px;top:653px;font-size:9px;color:#222">Python</span>
<!-- watermark -->
<div class="a" style="left:18px;top:607.5px;width:10.5px;height:43px;background:rgba(70,150,100,0.13)"></div>
<div class="a" style="left:37.7px;top:614px;width:21.7px;height:36px;background:rgba(70,150,100,0.13)"></div>
<div class="a" style="left:62px;top:604px;font-size:48px;font-weight:bold;letter-spacing:5px;color:rgba(0,0,0,0.065);white-space:pre;line-height:60px;transform:scaleX(0.62);transform-origin:0 0">REEBUF</div>
</body></html>
